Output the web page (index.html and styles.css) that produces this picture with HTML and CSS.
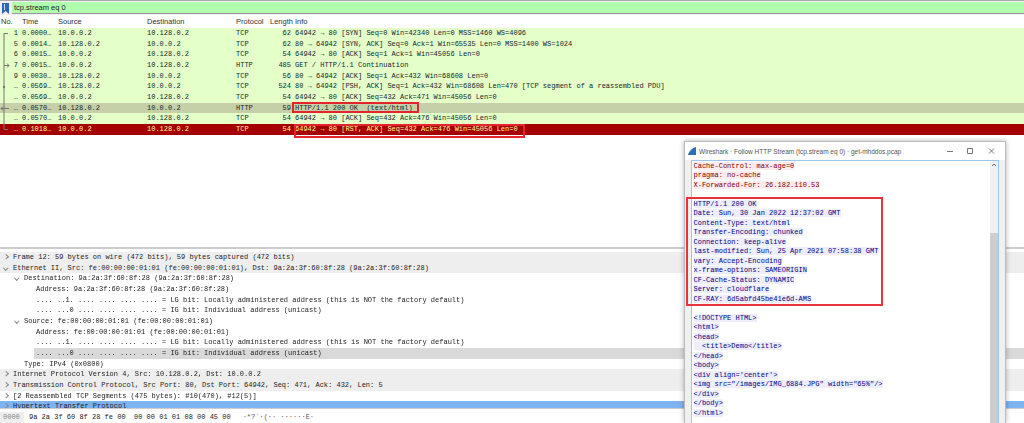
FILE: index.html
```html
<!DOCTYPE html>
<html lang="en">
<head>
    <meta charset="UTF-8">
    <title>Wireshark - get-mhddos.pcap</title>
    <link rel="stylesheet" href="styles.css">
</head>
<body>
    <div class="filter-bar">
        <svg class="bookmark" width="7" height="11" viewBox="0 0 7 11"><path d="M0 0h7v11L3.500 8 0 11z" fill="#2f66b5"/><path d="M2 1h1v6H2z" fill="#cfe0f5"/></svg>
        <div class="filter-input">tcp.stream eq 0</div>
    </div>

    <div class="packets">
        <div class="row head"><span>No.</span><span>Time</span><span>Source</span><span>Destination</span><span>Protocol</span><span>Length</span><span>Info</span></div>
        <div class="row"><span>1</span><span>0.0000…</span><span>10.0.0.2</span><span>10.128.0.2</span><span>TCP</span><span>62</span><span>64942 → 80 [SYN] Seq=0 Win=42340 Len=0 MSS=1460 WS=4096</span></div>
        <div class="row"><span>5</span><span>0.0014…</span><span>10.128.0.2</span><span>10.0.0.2</span><span>TCP</span><span>62</span><span>80 → 64942 [SYN, ACK] Seq=0 Ack=1 Win=65535 Len=0 MSS=1400 WS=1024</span></div>
        <div class="row"><span>6</span><span>0.0015…</span><span>10.0.0.2</span><span>10.128.0.2</span><span>TCP</span><span>54</span><span>64942 → 80 [ACK] Seq=1 Ack=1 Win=45056 Len=0</span></div>
        <div class="row"><span>7</span><span>0.0015…</span><span>10.0.0.2</span><span>10.128.0.2</span><span>HTTP</span><span>485</span><span>GET / HTTP/1.1 Continuation</span></div>
        <div class="row"><span>9</span><span>0.0030…</span><span>10.128.0.2</span><span>10.0.0.2</span><span>TCP</span><span>56</span><span>80 → 64942 [ACK] Seq=1 Ack=432 Win=68608 Len=0</span></div>
        <div class="row"><span>…</span><span>0.0569…</span><span>10.128.0.2</span><span>10.0.0.2</span><span>TCP</span><span>524</span><span>80 → 64942 [PSH, ACK] Seq=1 Ack=432 Win=68608 Len=470 [TCP segment of a reassembled PDU]</span></div>
        <div class="row"><span>…</span><span>0.0569…</span><span>10.0.0.2</span><span>10.128.0.2</span><span>TCP</span><span>54</span><span>64942 → 80 [ACK] Seq=432 Ack=471 Win=45056 Len=0</span></div>
        <div class="row current"><span>…</span><span>0.0570…</span><span>10.128.0.2</span><span>10.0.0.2</span><span>HTTP</span><span>59</span><span>HTTP/1.1 200 OK  (text/html)</span></div>
        <div class="row"><span>…</span><span>0.0570…</span><span>10.0.0.2</span><span>10.128.0.2</span><span>TCP</span><span>54</span><span>64942 → 80 [ACK] Seq=432 Ack=476 Win=45056 Len=0</span></div>
        <div class="row rst"><span>…</span><span>0.1018…</span><span>10.0.0.2</span><span>10.128.0.2</span><span>TCP</span><span>54</span><span>64942 → 80 [RST, ACK] Seq=432 Ack=476 Win=45056 Len=0</span></div>
        <svg class="conv-lines" width="14" height="108" viewBox="0 0 14 108">
            <path d="M8 5.500H4V101.500H8" fill="none" stroke="#777" stroke-width="1"/>
            <path d="M4 37.500H9M7 35.500l2 2-2 2" fill="none" stroke="#777" stroke-width="1"/>
            <path d="M9 80.500H1M3 78.500l-2 2 2 2" fill="none" stroke="#777" stroke-width="1"/>
            <circle cx="4" cy="59" r="1.200" fill="#777"/>
        </svg>
        <div class="callout callout-ok"></div>
        <div class="callout callout-rst"></div>
    </div>

    <div class="details">
        <div class="node top"><i class="closed"></i>Frame 12: 59 bytes on wire (472 bits), 59 bytes captured (472 bits)</div>
        <div class="node top"><i class="open"></i>Ethernet II, Src: fe:00:00:00:01:01 (fe:00:00:00:01:01), Dst: 9a:2a:3f:60:8f:28 (9a:2a:3f:60:8f:28)</div>
        <div class="node l1"><i class="open"></i>Destination: 9a:2a:3f:60:8f:28 (9a:2a:3f:60:8f:28)</div>
        <div class="node l2">Address: 9a:2a:3f:60:8f:28 (9a:2a:3f:60:8f:28)</div>
        <div class="node l2">.... ..1. .... .... .... .... = LG bit: Locally administered address (this is NOT the factory default)</div>
        <div class="node l2">.... ...0 .... .... .... .... = IG bit: Individual address (unicast)</div>
        <div class="node l1"><i class="open"></i>Source: fe:00:00:00:01:01 (fe:00:00:00:01:01)</div>
        <div class="node l2">Address: fe:00:00:00:01:01 (fe:00:00:00:01:01)</div>
        <div class="node l2">.... ..1. .... .... .... .... = LG bit: Locally administered address (this is NOT the factory default)</div>
        <div class="node l2 field-hl">.... ...0 .... .... .... .... = IG bit: Individual address (unicast)</div>
        <div class="node l1">Type: IPv4 (0x0800)</div>
        <div class="node top"><i class="closed"></i>Internet Protocol Version 4, Src: 10.128.0.2, Dst: 10.0.0.2</div>
        <div class="node top"><i class="closed"></i>Transmission Control Protocol, Src Port: 80, Dst Port: 64942, Seq: 471, Ack: 432, Len: 5</div>
        <div class="node plain"><i class="closed"></i>[2 Reassembled TCP Segments (475 bytes): #10(470), #12(5)]</div>
        <div class="node selected"><i class="closed"></i>Hypertext Transfer Protocol</div>
    </div>

    <div class="hex">
        <div class="hex-row"><span class="offset">0000</span><span>9a 2a 3f 60 8f 28 fe 00  00 00 01 01 08 00 45 00</span><span class="ascii">·*?`·(·· ······E·</span></div>
    </div>

    <div class="stream-window">
        <div class="titlebar">
            <svg width="8" height="8" viewBox="0 0 8 8"><path d="M0 8 C1 4 4 1 8 0V8z" fill="#2f6fb5"/></svg>
            <span class="title">Wireshark · Follow HTTP Stream (tcp.stream eq 0) · get-mhddos.pcap</span>
            <svg class="controls" width="50" height="8" viewBox="0 0 50 8"><path d="M0 4.500H6M20.500 1.500h5v5h-5zM42 1.500l5 5M47 1.500l-5 5" fill="none" stroke="#777" stroke-width="1"/></svg>
        </div>
        <div class="stream">
            <div class="stream-text">
                <div class="client">
                    <div><span>Cache-Control: max-age=0</span></div>
                    <div><span>pragma: no-cache</span></div>
                    <div><span>X-Forwarded-For: 26.182.110.53</span></div>
                </div>
                <div class="gap"></div>
                <div class="server">
                    <div><span>HTTP/1.1 200 OK</span></div>
                    <div><span>Date: Sun, 30 Jan 2022 12:37:02 GMT</span></div>
                    <div><span>Content-Type: text/html</span></div>
                    <div><span>Transfer-Encoding: chunked</span></div>
                    <div><span>Connection: keep-alive</span></div>
                    <div><span>last-modified: Sun, 25 Apr 2021 07:58:38 GMT</span></div>
                    <div><span>vary: Accept-Encoding</span></div>
                    <div><span>x-frame-options: SAMEORIGIN</span></div>
                    <div><span>CF-Cache-Status: DYNAMIC</span></div>
                    <div><span>Server: cloudflare</span></div>
                    <div><span>CF-RAY: 6d5abfd45be41e6d-AMS</span></div>
                    <div class="gap"></div>
                    <div><span>&lt;!DOCTYPE HTML&gt;</span></div>
                    <div><span>&lt;html&gt;</span></div>
                    <div><span>&lt;head&gt;</span></div>
                    <div><span>  &lt;title&gt;Demo&lt;/title&gt;</span></div>
                    <div><span>&lt;/head&gt;</span></div>
                    <div><span>&lt;body&gt;</span></div>
                    <div><span>&lt;div align='center'&gt;</span></div>
                    <div><span>&lt;img src="/images/IMG_6884.JPG" width="65%"/&gt;</span></div>
                    <div><span>&lt;/div&gt;</span></div>
                    <div><span>&lt;/body&gt;</span></div>
                    <div><span>&lt;/html&gt;</span></div>
                </div>
            </div>
            <div class="scrollbar">
                <svg class="scroll-up" width="8" height="8" viewBox="0 0 8 8"><path d="M2 5l2-2 2 2" fill="none" stroke="#666" stroke-width="1"/></svg>
                <div class="thumb"></div>
            </div>
        </div>
        <div class="callout callout-headers"></div>
    </div>
</body>
</html>
```

FILE: styles.css
```css
html, body {
    margin: 0;
    padding: 0;
    height: 423px;
    overflow: hidden;
}
body {
    position: relative;
    display: flex;
    flex-direction: column;
    background: #fff;
    color: #222;
    font-family: "Liberation Mono", monospace;
    font-size: 7px;
    filter: blur(.3px); /* the reference is a scaled-down capture */
}

.filter-bar {
    display: flex;
    align-items: center;
    gap: 3px;
    height: 15px;
    padding-left: 2px;
    box-sizing: border-box;
    background: #f0f0f0;
    border-top: 1px solid #aaa;
}
.bookmark {
    flex: none;
}
.filter-input {
    flex: 1;
    height: 11px;
    line-height: 11px;
    padding-left: 2px;
    background: #afffaf;
    border-bottom: 1px solid #9a9a9a;
    font-family: "Liberation Sans", sans-serif;
    font-size: 7.5px;
}

.packets {
    position: relative;
    height: 232px;
}
.row {
    display: grid;
    grid-template-columns: 18px 40px 89px 89px 32px 23px 1fr;
    height: 10.67px;
    line-height: 10.67px;
    background: #e4ffc7;
    color: #12272e;
    white-space: pre;
}
.row span:nth-child(1),
.row span:nth-child(6) {
    text-align: right;
}
.row span:nth-child(2) {
    padding-left: 4px;
}
.row span:nth-child(7) {
    padding-left: 4px;
}
.row.head {
    height: 13px;
    line-height: 13px;
    background: #fff;
    color: #333;
    font-family: "Liberation Sans", sans-serif;
    font-size: 7.5px;
}
.row.head span {
    text-align: left;
}
.row.head span:nth-child(1) {
    padding-left: 1px;
}
.row.head span:nth-child(6) {
    margin-left: 2px;
    margin-right: -4px;
}
.row.current {
    background: #c5d0a8;
}
.row.rst {
    background: #a40000;
    color: #fffc9c;
}
.conv-lines {
    position: absolute;
    left: 0;
    top: 13px;
}
.callout {
    position: absolute;
    border: 2px solid #e3242b;
    box-sizing: border-box;
}
.callout-ok {
    left: 292px;
    top: 87px;
    width: 127px;
    height: 11px;
}
.callout-rst {
    left: 294px;
    top: 109px;
    width: 231px;
    height: 14px;
}

.details {
    border-top: 2px solid #ccc;
    padding-top: 3px;
}
.node {
    position: relative;
    height: 10.67px;
    line-height: 10.67px;
    white-space: pre;
    color: #222;
}
.node i {
    position: absolute;
    top: 3px;
    width: 2.5px;
    height: 2.5px;
    margin-left: -9px;
    border-right: 1px solid #888;
    border-bottom: 1px solid #888;
}
.node i.closed {
    transform: rotate(-45deg);
}
.node i.open {
    transform: rotate(45deg);
}
.node.top, .node.plain, .node.selected {
    padding-left: 13px;
}
.node.top {
    background: #eee;
}
.node.selected {
    background: #7db4f0;
}
.node.l1 {
    padding-left: 24px;
}
.node.l2 {
    padding-left: 36px;
}
.node.field-hl {
    background: #d9d9d9;
    margin-left: 34px;
    padding-left: 2px;
}

.hex {
    flex: 1;
    min-height: 0;
    border-top: 1px solid #ccc;
    margin-top: -4px;
    position: relative;
    background: #fff;
    padding-top: 3px;
}
.hex-row {
    display: flex;
    height: 10.67px;
    line-height: 10.67px;
    white-space: pre;
}
.offset {
    width: 21px;
    padding-left: 3px;
    margin-right: 5px;
    background: #eee;
    color: #888;
}
.ascii {
    margin-left: 12px;
    color: #555;
}

.stream-window {
    position: absolute;
    left: 684px;
    top: 141px;
    width: 322px;
    height: 282px;
    overflow: hidden;
    background: #f0f0f0;
    border: 1px solid #bbb;
    border-bottom: none;
    box-sizing: border-box;
    box-shadow: 0 0 5px rgba(0, 0, 0, .3);
}
.titlebar {
    display: flex;
    align-items: center;
    gap: 3px;
    height: 18px;
    padding-left: 3px;
    background: #fff;
}
.title {
    flex: 1;
    color: #555;
    font-family: "Liberation Sans", sans-serif;
    font-size: 6.5px;
}
.controls {
    margin-right: 8px;
}
.stream {
    display: flex;
    height: 264px;
    margin: 0 6px;
    background: #fff;
    border: 1px solid #9cc7e8;
    border-bottom: none;
}
.stream-text {
    flex: 1;
    padding: .5px 0 0 1.5px;
    line-height: 9.5px;
}
.stream-text span {
    white-space: pre;
}
.client > div, .server > div {
    height: 9.5px;
}
.gap {
    height: 9.5px;
}
.client span {
    background: #fbeded;
    color: #7f0000;
}
.server span {
    background: #ededfb;
    color: #00007f;
}
.scrollbar {
    display: flex;
    flex-direction: column;
    width: 8px;
    background: #f0f0f0;
}
.scroll-up {
    flex: none;
}
.thumb {
    flex: 1;
    margin-top: 64px;
    background: #cdcdcd;
}
.callout-headers {
    left: 1px;
    top: 55px;
    width: 197px;
    height: 109px;
    border-color: #e8323c;
}
```
